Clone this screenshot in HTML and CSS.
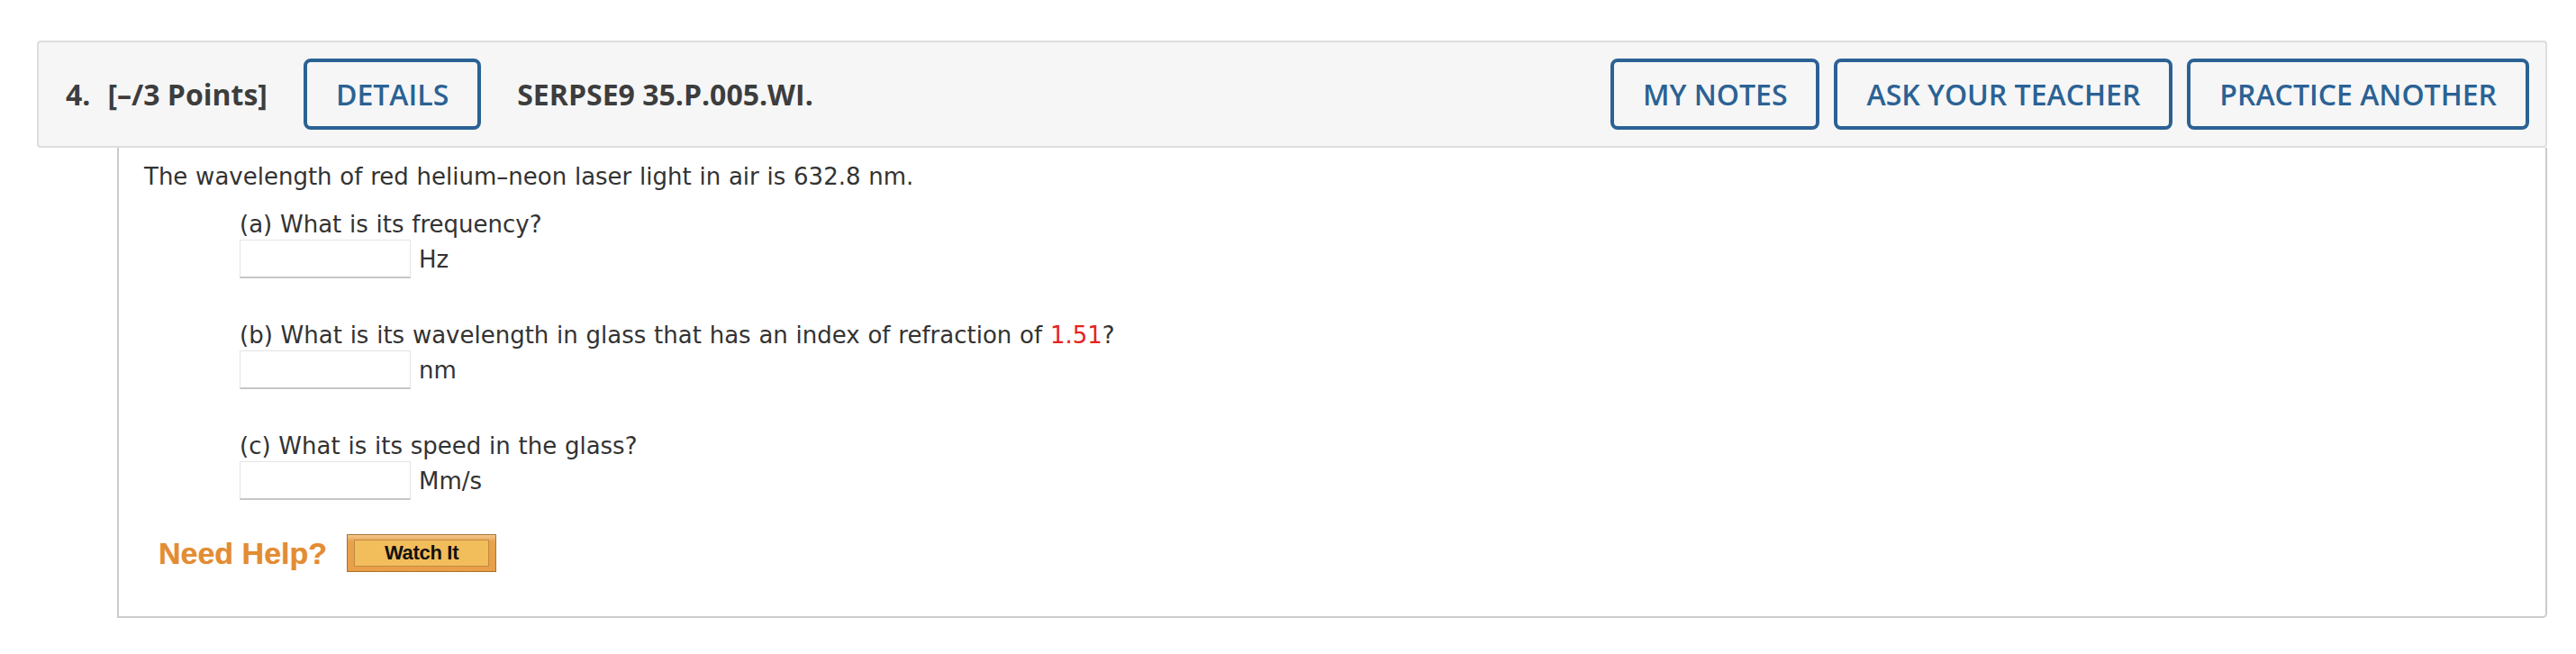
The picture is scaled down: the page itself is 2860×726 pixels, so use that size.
FILE: index.html
```html
<!DOCTYPE html>
<html lang="en">
<head>
<meta charset="utf-8">
<title>Question 4</title>
<link rel="stylesheet" href="styles.css">
</head>
<body>
<div class="question">
  <div class="q-header">
    <span class="q-num">4.</span>
    <span class="q-points">[–/3 Points]</span>
    <button class="btn-outline btn-details">DETAILS</button>
    <span class="q-id">SERPSE9 35.P.005.WI.</span>
    <div class="q-actions">
      <button class="btn-outline">MY NOTES</button>
      <button class="btn-outline">ASK YOUR TEACHER</button>
      <button class="btn-outline">PRACTICE ANOTHER</button>
    </div>
  </div>
  <div class="q-body">
    <p class="intro">The wavelength of red helium–neon laser light in air is 632.8 nm.</p>
    <div class="part">
      <p class="prompt">(a) What is its frequency?</p>
      <div class="answer-row">
        <input class="answer" type="text">
        <span class="unit">Hz</span>
      </div>
    </div>
    <div class="part">
      <p class="prompt">(b) What is its wavelength in glass that has an index of refraction of <span class="red">1.51</span>?</p>
      <div class="answer-row">
        <input class="answer" type="text">
        <span class="unit">nm</span>
      </div>
    </div>
    <div class="part">
      <p class="prompt">(c) What is its speed in the glass?</p>
      <div class="answer-row">
        <input class="answer" type="text">
        <span class="unit">Mm/s</span>
      </div>
    </div>
    <div class="help-row">
      <span class="need-help">Need Help?</span>
      <span class="watch-btn"><span class="watch-inner">Watch It</span></span>
    </div>
  </div>
</div>
</body>
</html>
```

FILE: styles.css
```css
html, body {
  margin: 0;
  padding: 0;
  background: #ffffff;
}

.question {
  margin: 45px 32px 0 41px;
}

.q-header {
  display: flex;
  align-items: center;
  height: 115px;
  box-sizing: content-box;
  padding: 0 18px 0 30px;
  background: #f6f6f6;
  border: 2px solid #dedede;
  border-radius: 4px;
  font-family: "Open Sans", "Liberation Sans", sans-serif;
  color: #3d3d3d;
}

.q-num,
.q-points,
.q-id {
  font-size: 32px;
  font-weight: 700;
  line-height: 40px;
}

.q-points {
  margin-left: 19px;
}

.btn-outline {
  box-sizing: border-box;
  height: 79px;
  padding: 0 32px;
  background: transparent;
  border: 4px solid #2b6294;
  border-radius: 8px;
  font-family: "Open Sans", "Liberation Sans", sans-serif;
  font-size: 32px;
  font-weight: 600;
  color: #2b6294;
  line-height: 40px;
  cursor: pointer;
}

.btn-details {
  margin-left: 40px;
}

.q-id {
  margin-left: 40px;
}

.q-actions {
  display: flex;
  gap: 16px;
  margin-left: auto;
}

.q-body {
  margin-left: 89px;
  padding: 16px 0 0 28px;
  border: 2px solid #cccccc;
  border-top: none;
  border-radius: 0 0 5px 0;
  font-family: "DejaVu Sans", Verdana, sans-serif;
  font-size: 26px;
  word-spacing: 0.5px;
  color: #333333;
  box-sizing: border-box;
  height: 522px;
}

.intro,
.prompt {
  margin: 0;
  line-height: 32px;
}

.part {
  margin-left: 106px;
}

.part:first-of-type {
  margin-top: 21px;
}

.part + .part {
  margin-top: 47px;
}

.prompt {
  margin-bottom: 1px;
}

.answer-row {
  display: flex;
  align-items: center;
}

.answer {
  box-sizing: border-box;
  width: 190px;
  height: 43px;
  margin: 0;
  padding: 0 6px;
  background: #ffffff;
  border: 1px solid #e4e4e4;
  border-bottom: 2px solid #c6c6c6;
  border-radius: 0;
  font-family: "DejaVu Sans", Verdana, sans-serif;
  font-size: 26px;
}

.unit {
  margin-left: 9px;
  line-height: 32px;
}

.red {
  color: #e5231b;
}

.help-row {
  display: flex;
  align-items: center;
  margin: 38px 0 0 16px;
}

.need-help {
  font-family: "Liberation Sans", Arial, sans-serif;
  font-size: 34px;
  font-weight: 700;
  word-spacing: 0;
  color: #e38c33;
  text-shadow: 0 0 1px rgba(226, 137, 47, 0.6);
  line-height: 40px;
}

.watch-btn {
  display: flex;
  box-sizing: border-box;
  width: 166px;
  height: 42px;
  margin-left: 22px;
  padding: 5px 7px;
  background: linear-gradient(#f3c98f 0, #e9a24c 7px, #e99f47 100%);
  border: 1px solid #a9712f;
}

.watch-inner {
  flex: 1;
  display: flex;
  align-items: center;
  justify-content: center;
  background: #f2bd5b;
  border: 1px solid #c08b45;
  font-family: "Liberation Sans", Arial, sans-serif;
  font-size: 22px;
  font-weight: 700;
  word-spacing: 0;
  color: #111111;
  letter-spacing: -0.3px;
}
```
